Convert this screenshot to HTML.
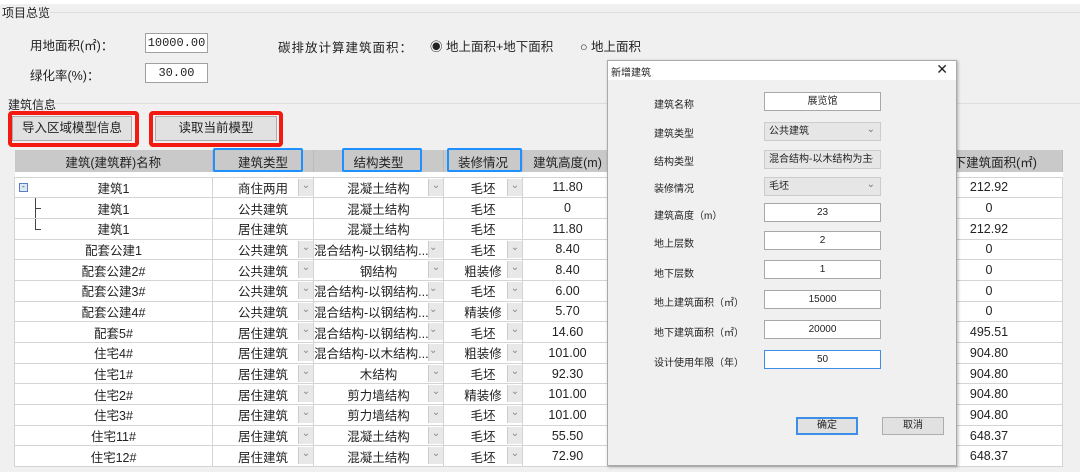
<!DOCTYPE html><html><head><meta charset="utf-8"><style>
*{box-sizing:border-box;margin:0;padding:0}
body{width:1080px;height:472px;overflow:hidden;background:#f0f0f0;font-family:"Liberation Sans","Noto Sans CJK SC",sans-serif;font-size:12px;color:#222;position:relative}
.a{position:absolute}
.inp{position:absolute;background:#fff;border:1px solid #a0a0a0;text-align:center;font-family:"Liberation Mono","Noto Sans CJK SC",monospace;font-size:12px}
.btn{position:absolute;background:#e1e1e1;border:1px solid #adadad;text-align:center;font-size:12px}
table{position:absolute;left:14px;top:150px;border-collapse:collapse;table-layout:fixed;font-size:12.5px}
td{border:1px solid #d4d4d4;height:20.7px;text-align:center;background:#fff;white-space:nowrap;overflow:hidden;position:relative;padding:0}
th{background:#c9c9c9;height:22px;font-weight:normal;border-right:1px solid #bbb;font-size:12.5px}
tr.sp td{height:5px;background:#fff;border:none}
.dd::after{content:"⌄";position:absolute;right:0;top:1px;width:14px;height:17px;background:#e8e8e8;border-left:1px solid #ccc;color:#888;font-size:10px;line-height:13px}
.dlg{position:absolute;left:607px;top:60px;width:350px;height:406px;background:#f0f0f0;border:1px solid #aaa;box-shadow:1px 1px 3px rgba(0,0,0,.3)}
.lbl{position:absolute;left:46px;font-size:10px}
.f{position:absolute;left:156px;width:117px;height:19px;background:#fff;border:1px solid #a8a8a8;text-align:center;font-size:10px;line-height:17px}
.s{background:#e6e6e6;text-align:left;padding-left:4px;border-color:#ccc}
.s::after{content:"⌄";position:absolute;right:5px;top:-2px;color:#777}
.red{position:absolute;border:4px solid #f41a12;border-radius:4px}
.blue{position:absolute;border:2px solid #1e90ff;border-radius:2px}
</style></head><body>
<div class="a" style="left:0;top:0;width:1080px;height:4px;background:#fff"></div>
<div class="a" style="left:2px;top:4px;font-size:12px">项目总览</div>
<div class="a" style="left:50px;top:12px;width:1030px;border-top:1px solid #ddd"></div>
<div class="a" style="left:30px;top:35px;font-size:12.5px">用地面积(㎡)：</div>
<div class="inp" style="left:145px;top:33px;width:63px;height:20px;line-height:18px">10000.00</div>
<div class="a" style="left:278px;top:37px;font-size:12.5px;letter-spacing:1px">碳排放计算建筑面积：</div>
<div class="a" style="left:430px;top:36px;font-size:12.5px">◉ 地上面积+地下面积</div>
<div class="a" style="left:580px;top:36px;font-size:12.5px">○ 地上面积</div>
<div class="a" style="left:30px;top:65px;font-size:12.5px">绿化率(%)：</div>
<div class="inp" style="left:145px;top:63px;width:63px;height:20px;line-height:18px">30.00</div>
<div class="a" style="left:8px;top:96px;font-size:12px">建筑信息</div>
<div class="a" style="left:50px;top:103px;width:1030px;border-top:1px solid #ddd"></div>
<div class="btn" style="left:12px;top:116px;width:120px;height:25px;line-height:23px;font-size:12.5px">导入区域模型信息</div>
<div class="btn" style="left:155px;top:116px;width:122px;height:25px;line-height:23px;font-size:12.5px">读取当前模型</div>
<div class="red" style="left:8px;top:111px;width:131px;height:36px"></div>
<div class="red" style="left:149px;top:111px;width:134px;height:36px"></div>
<table>
<colgroup><col style="width:198px"><col style="width:101px"><col style="width:130px"><col style="width:79px"><col style="width:90px"><col style="width:78px"><col style="width:78px"><col style="width:147px"><col style="width:147px"></colgroup>
<tr><th>建筑(建筑群)名称</th><th>建筑类型</th><th>结构类型</th><th>装修情况</th><th>建筑高度(m)</th><th></th><th></th><th></th><th>地下建筑面积(㎡)</th></tr>
<tr class="sp"><td colspan="9"></td></tr>
<tr><td><span style="position:absolute;left:4px;top:5px;width:9px;height:9px;border:1px solid #5a7fc0;background:#dde8f8;font-size:8px;line-height:6px">-</span>建筑1</td><td class="dd">商住两用</td><td class="dd">混凝土结构</td><td class="dd">毛坯</td><td>11.80</td><td></td><td></td><td></td><td>212.92</td></tr>
<tr><td><span style="position:absolute;left:20px;top:0;width:6px;height:20px;border-left:1px solid #444"></span><span style="position:absolute;left:20px;top:10px;width:6px;border-top:1px solid #444"></span>建筑1</td><td>公共建筑</td><td>混凝土结构</td><td>毛坯</td><td>0</td><td></td><td></td><td></td><td>0</td></tr>
<tr><td><span style="position:absolute;left:20px;top:0;width:6px;height:11px;border-left:1px solid #444;border-bottom:1px solid #444"></span>建筑1</td><td>居住建筑</td><td>混凝土结构</td><td>毛坯</td><td>11.80</td><td></td><td></td><td></td><td>212.92</td></tr>
<tr><td>配套公建1</td><td class="dd">公共建筑</td><td class="dd" style="text-align:left">混合结构-以钢结构...</td><td class="dd">毛坯</td><td>8.40</td><td></td><td></td><td></td><td>0</td></tr>
<tr><td>配套公建2#</td><td class="dd">公共建筑</td><td class="dd">钢结构</td><td class="dd">粗装修</td><td>8.40</td><td></td><td></td><td></td><td>0</td></tr>
<tr><td>配套公建3#</td><td class="dd">公共建筑</td><td class="dd" style="text-align:left">混合结构-以钢结构...</td><td class="dd">毛坯</td><td>6.00</td><td></td><td></td><td></td><td>0</td></tr>
<tr><td>配套公建4#</td><td class="dd">公共建筑</td><td class="dd" style="text-align:left">混合结构-以钢结构...</td><td class="dd">精装修</td><td>5.70</td><td></td><td></td><td></td><td>0</td></tr>
<tr><td>配套5#</td><td class="dd">居住建筑</td><td class="dd" style="text-align:left">混合结构-以钢结构...</td><td class="dd">毛坯</td><td>14.60</td><td></td><td></td><td></td><td>495.51</td></tr>
<tr><td>住宅4#</td><td class="dd">居住建筑</td><td class="dd" style="text-align:left">混合结构-以木结构...</td><td class="dd">粗装修</td><td>101.00</td><td></td><td></td><td></td><td>904.80</td></tr>
<tr><td>住宅1#</td><td class="dd">居住建筑</td><td class="dd">木结构</td><td class="dd">毛坯</td><td>92.30</td><td></td><td></td><td></td><td>904.80</td></tr>
<tr><td>住宅2#</td><td class="dd">居住建筑</td><td class="dd">剪力墙结构</td><td class="dd">精装修</td><td>101.00</td><td></td><td></td><td></td><td>904.80</td></tr>
<tr><td>住宅3#</td><td class="dd">居住建筑</td><td class="dd">剪力墙结构</td><td class="dd">毛坯</td><td>101.00</td><td></td><td></td><td></td><td>904.80</td></tr>
<tr><td>住宅11#</td><td class="dd">居住建筑</td><td class="dd">混凝土结构</td><td class="dd">毛坯</td><td>55.50</td><td></td><td></td><td></td><td>648.37</td></tr>
<tr><td>住宅12#</td><td class="dd">居住建筑</td><td class="dd">混凝土结构</td><td class="dd">毛坯</td><td>72.90</td><td>24</td><td>1</td><td>11072.36</td><td>648.37</td></tr>
</table>
<div class="blue" style="left:213px;top:148px;width:90px;height:24px"></div>
<div class="blue" style="left:342px;top:148px;width:80px;height:24px"></div>
<div class="blue" style="left:447px;top:148px;width:75px;height:24px"></div>
<div class="dlg">
<div class="a" style="left:0;top:0;width:348px;height:19px;background:#fff;font-size:10px;padding:3px 0 0 3px">新增建筑<span style="position:absolute;right:8px;top:0;font-size:14px">✕</span></div>
<div class="lbl" style="top:35px">建筑名称</div><div class="f" style="top:31px">展览馆</div>
<div class="lbl" style="top:64px">建筑类型</div><div class="f s" style="top:61px">公共建筑</div>
<div class="lbl" style="top:92px">结构类型</div><div class="f s" style="top:89px">混合结构-以木结构为主</div>
<div class="lbl" style="top:119px">装修情况</div><div class="f s" style="top:116px">毛坯</div>
<div class="lbl" style="top:146px">建筑高度（m）</div><div class="f" style="top:142px">23</div>
<div class="lbl" style="top:174px">地上层数</div><div class="f" style="top:170px">2</div>
<div class="lbl" style="top:204px">地下层数</div><div class="f" style="top:199px">1</div>
<div class="lbl" style="top:233px">地上建筑面积（㎡）</div><div class="f" style="top:229px">15000</div>
<div class="lbl" style="top:263px">地下建筑面积（㎡）</div><div class="f" style="top:259px">20000</div>
<div class="lbl" style="top:293px">设计使用年限（年）</div><div class="f" style="top:289px;border-color:#3c8ee8">50</div>
<div class="btn" style="left:188px;top:356px;width:62px;height:18px;line-height:14px;font-size:10px;border:2px solid #3c8ee8">确定</div>
<div class="btn" style="left:274px;top:356px;width:62px;height:18px;line-height:16px;font-size:10px">取消</div>
</div>
</body></html>
